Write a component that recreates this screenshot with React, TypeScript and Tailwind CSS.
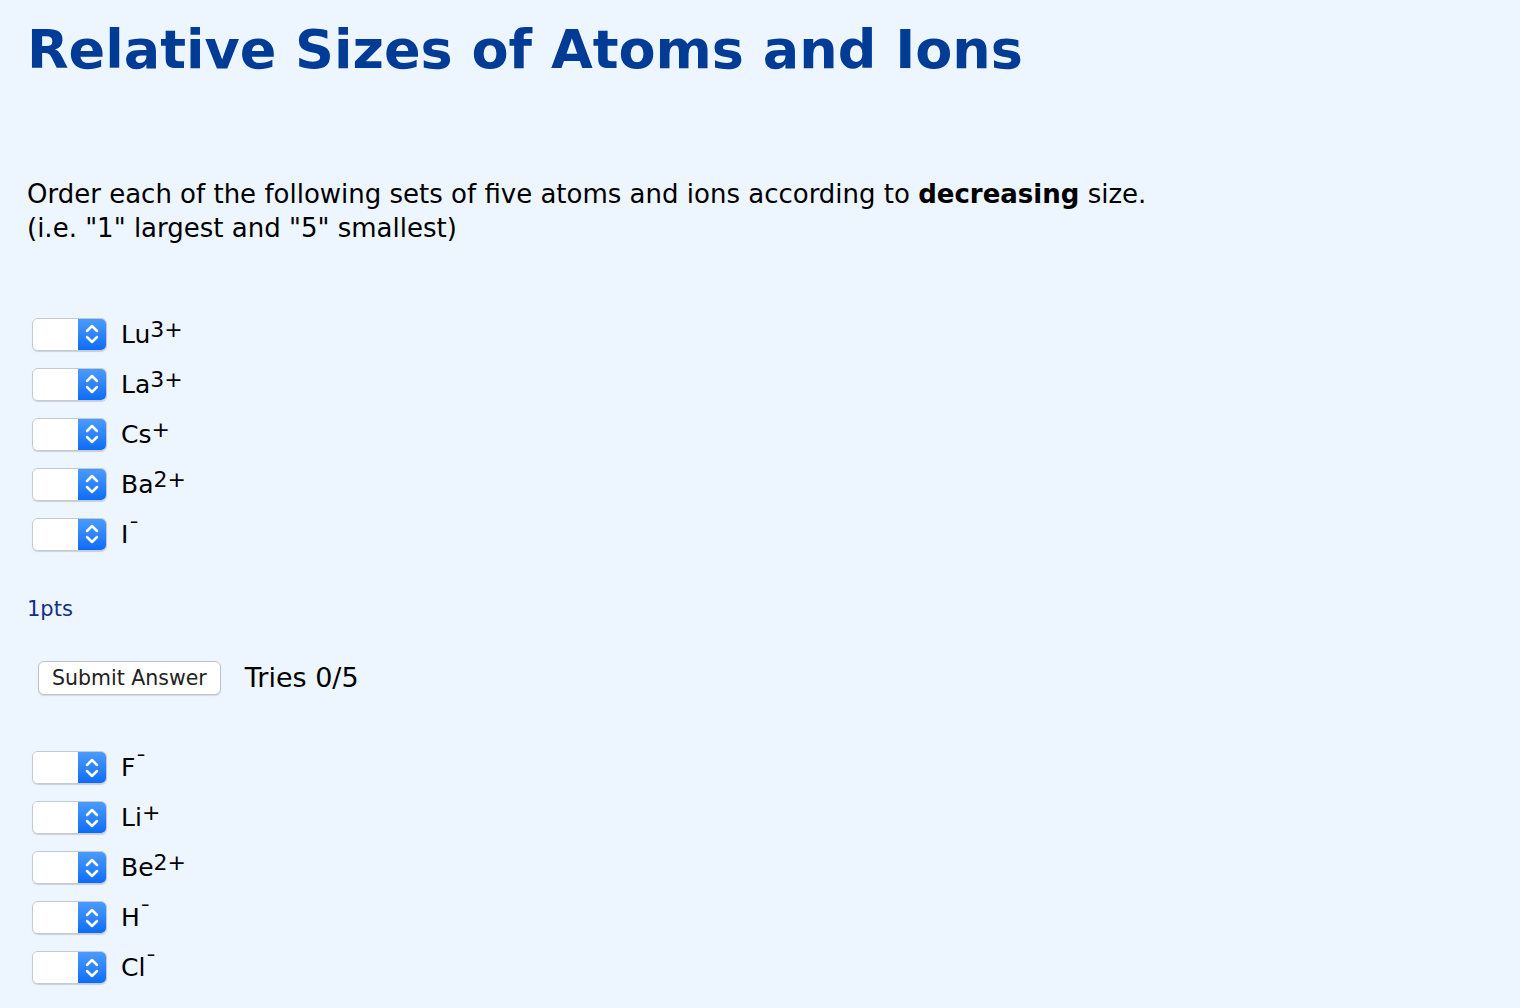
const set1 = [
  { el: "Lu", ch: "3+" },
  { el: "La", ch: "3+" },
  { el: "Cs", ch: "+" },
  { el: "Ba", ch: "2+" },
  { el: "I", ch: "-" },
];

const set2 = [
  { el: "F", ch: "-" },
  { el: "Li", ch: "+" },
  { el: "Be", ch: "2+" },
  { el: "H", ch: "-" },
  { el: "Cl", ch: "-" },
];

const Picker = () => (
  <div className="flex h-[33px] w-[75px] overflow-hidden rounded-[6px] border border-[#c4c8d0] shadow-[0_1px_1px_rgba(0,0,0,0.15)]">
    <div className="flex-1 bg-white" />
    <div className="flex w-[28px] items-center justify-center bg-gradient-to-b from-[#4a9bfb] to-[#0a6cf6]">
      <svg width="16" height="26" viewBox="0 0 16 26" fill="none">
        <path d="M3 10l5-5 5 5M3 16l5 5 5-5" stroke="white" strokeWidth="2.5" strokeLinecap="round" strokeLinejoin="round" />
      </svg>
    </div>
  </div>
);

const Row = ({ el, ch }: { el: string; ch: string }) => (
  <div className="flex h-[50px] items-center gap-[14px] pl-[5px]">
    <Picker />
    <span className="text-[25px] leading-none">
      {el}
      <sup className="relative -top-[6px] text-[22px]">{ch === "-" ? "\u02C9" : ch}</sup>
    </span>
  </div>
);

export default function App() {
  return (
    <div className="min-h-screen bg-[#edf5ff] pl-[27px] pt-[15px] text-black" style={{ fontFamily: "Verdana, 'DejaVu Sans', sans-serif" }}>
      <h1 className="text-[54px] font-bold leading-[70px] text-[#003b96]">Relative Sizes of Atoms and Ions</h1>
      <p className="mt-[92px] text-[26px] leading-[34px]">
        Order each of the following sets of five atoms and ions according to <b>decreasing</b> size.
        <br />
        (i.e. "1" largest and "5" smallest)
      </p>
      <div className="mt-[64px]">
        {set1.map((r, i) => (
          <Row key={i} el={r.el} ch={r.ch} />
        ))}
      </div>
      <div className="mt-[36px] text-[21px] leading-[28px] text-[#12308a]">1pts</div>
      <div className="mt-[35px] flex items-center gap-[24px] pl-[11px]">
        <button className="h-[34px] rounded-[6px] border border-[#bfc3c9] bg-white px-[13px] text-[20.5px] text-[#222] shadow-[0_1px_1px_rgba(0,0,0,0.12)]">
          Submit Answer
        </button>
        <span className="text-[27px]">Tries 0/5</span>
      </div>
      <div className="mt-[44px]">
        {set2.map((r, i) => (
          <Row key={i} el={r.el} ch={r.ch} />
        ))}
      </div>
    </div>
  );
}
